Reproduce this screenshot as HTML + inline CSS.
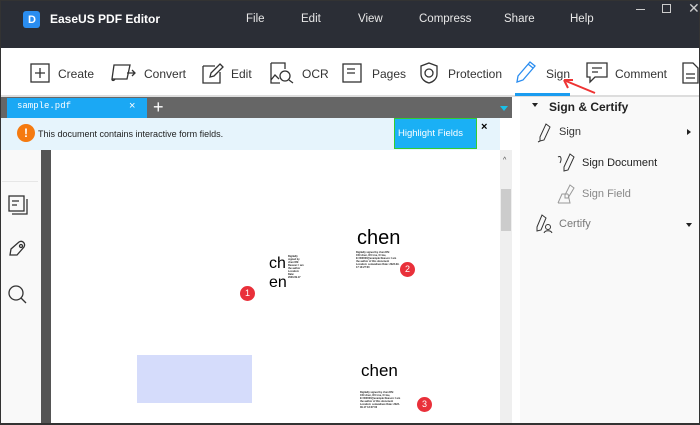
<!DOCTYPE html>
<html><head><meta charset="utf-8"><style>
*{margin:0;padding:0;box-sizing:border-box}
body{width:700px;height:425px;overflow:hidden;font-family:"Liberation Sans",sans-serif;background:#fff;position:relative}
.a{position:absolute}
.top{left:0;top:0;width:700px;height:48px;background:#2b2e36}
.menu{color:#e8e8e8;font-size:11.5px;top:13px}
.tb{top:48px;left:0;width:700px;height:49px;background:#fff;border-bottom:2px solid #ddd}
.ti{font-size:12px;color:#333;top:67px}
svg{position:absolute;fill:none;stroke:#333;stroke-width:1.3}
.small{font-size:2.5px;line-height:3px;font-weight:bold;color:#222}
.badge{width:15px;height:15px;border-radius:50%;background:#e9303a;color:#fff;font-size:9px;text-align:center;line-height:15px}
</style></head><body>
<div class="a top"></div>
<div class="a" style="left:23px;top:11px;width:17px;height:17px;border-radius:3px;background:#2a8df0"></div>
<div class="a" style="left:28px;top:14px;color:#fff;font-size:11px;font-weight:bold">D</div>
<div class="a" style="left:50px;top:12px;color:#fff;font-size:12px;font-weight:bold">EaseUS PDF Editor</div>
<div class="a menu" style="left:246px">File</div>
<div class="a menu" style="left:301px">Edit</div>
<div class="a menu" style="left:358px">View</div>
<div class="a menu" style="left:419px">Compress</div>
<div class="a menu" style="left:504px">Share</div>
<div class="a menu" style="left:570px">Help</div>
<div class="a" style="left:636px;top:9px;width:9px;height:1px;background:#ccc"></div>
<div class="a" style="left:662px;top:4px;width:9px;height:9px;border:1px solid #ccc"></div>
<div class="a" style="left:688px;top:0px;color:#ccc;font-size:14px">✕</div>
<div class="a tb"></div>
<svg style="left:30px;top:63px" width="20" height="20"><rect x="1" y="1" width="18" height="18"/><path d="M10 5v10M5 10h10"/></svg>
<div class="a ti" style="left:58px">Create</div>
<svg style="left:110px;top:63px" width="26" height="20"><path d="M4 2h16l-3 14H2zM2 16c0 2 2 2 3 0M17 10h8m-3-3 3 3-3 3"/></svg>
<div class="a ti" style="left:144px">Convert</div>
<svg style="left:202px;top:62px" width="22" height="22"><path d="M1 4h12M1 4v17h17V10M18 2l3 3-9 9-4 1 1-4z"/></svg>
<div class="a ti" style="left:231px">Edit</div>
<svg style="left:270px;top:62px" width="24" height="22"><path d="M1 1h14v6M1 1v20h9M1 18l4-5 4 4"/><circle cx="15" cy="14" r="5"/><path d="M19 18l4 3"/></svg>
<div class="a ti" style="left:302px">OCR</div>
<svg style="left:342px;top:62px" width="22" height="22"><rect x="1" y="2" width="18" height="18"/><path d="M5 7h8M5 11h8"/></svg>
<div class="a ti" style="left:372px">Pages</div>
<svg style="left:419px;top:62px" width="20" height="22"><path d="M10 1l8 3v8c0 5-4 8-8 9-4-1-8-4-8-9V4z"/><circle cx="10" cy="11" r="4"/></svg>
<div class="a ti" style="left:448px">Protection</div>
<svg style="left:515px;top:61px;stroke:#2a8df0" width="22" height="22"><path d="M15 1l5 4L8 19l-6 2 1-6zM13 3l5 4"/></svg>
<div class="a ti" style="left:546px">Sign</div>
<div class="a" style="left:515px;top:93px;width:55px;height:3px;background:#1a9cf0"></div>
<svg style="left:560px;top:78px;stroke:#e33;stroke-width:2" width="40" height="20"><path d="M35 15L6 3M4 2l9 0M4 2l4 8" /></svg>
<svg style="left:586px;top:62px" width="22" height="22"><path d="M1 1h20v14H9l-5 5v-5H1zM6 6h10M6 10h6"/></svg>
<div class="a ti" style="left:615px">Comment</div>
<svg style="left:682px;top:62px" width="18" height="22"><path d="M1 1h10l5 5v15H1zM4 12h9M4 16h9"/></svg>
<div class="a" style="left:0;top:97px;width:512px;height:21px;background:#666"></div>
<div class="a" style="left:7px;top:98px;width:140px;height:20px;background:#1ba8f4"></div>
<div class="a" style="left:17px;top:101px;color:#fff;font-size:9px;font-family:'Liberation Mono',monospace">sample.pdf</div>
<div class="a" style="left:129px;top:100px;color:#fff;font-size:11px">×</div>
<div class="a" style="left:153px;top:97px;color:#fff;font-size:18px">+</div>
<div class="a" style="top:106px;left:500px;width:0;height:0;border-left:4px solid transparent;border-right:4px solid transparent;border-top:5px solid #19c0e8"></div>
<div class="a" style="left:0;top:118px;width:500px;height:32px;background:#e6f4fc"></div>
<div class="a" style="left:17px;top:124px;width:18px;height:18px;border-radius:50%;background:#f57a10;color:#fff;font-size:12px;font-weight:bold;text-align:center;line-height:18px">!</div>
<div class="a" style="left:38px;top:129px;font-size:9px;color:#222">This document contains interactive form fields.</div>
<div class="a" style="left:394px;top:118px;width:83px;height:31px;background:#1ab0f5;border:1px solid #3c3;color:#fff;font-size:9.5px;line-height:29px;padding-left:3px">Highlight Fields</div>
<div class="a" style="left:481px;top:121px;font-size:11px;font-weight:bold">×</div>
<div class="a" style="left:0;top:150px;width:41px;height:275px;background:#f9f9f9"></div>
<div class="a" style="left:2px;top:181px;width:36px;height:1px;background:#e6e6e6"></div>
<svg style="left:8px;top:195px" width="20" height="20"><rect x="1" y="1" width="15" height="15"/><path d="M4 6h7M4 10h5M19 4v15H4"/></svg>
<svg style="left:8px;top:240px" width="20" height="20"><path d="M2 15l1-6 8-7c3-2 7 1 5 5l-7 8z"/><circle cx="13" cy="6" r="1.5"/></svg>
<svg style="left:8px;top:285px" width="20" height="20"><circle cx="8" cy="8" r="7"/><path d="M13 13l5 5"/></svg>
<div class="a" style="left:41px;top:150px;width:10px;height:275px;background:#555"></div>
<div class="a" style="left:500px;top:150px;width:12px;height:275px;background:#efefef"></div>
<div class="a" style="left:501px;top:189px;width:10px;height:42px;background:#ccc"></div>
<div class="a" style="left:503px;top:157px;font-size:7px;color:#444">^</div>
<div class="a" style="left:269px;top:254px;font-size:16px;line-height:19px">ch<br>en</div>
<div class="a small" style="left:288px;top:255px;width:16px">Digitally signed by chen DN: Reason: I am the author Location: Date: 2023.09.17</div>
<div class="a badge" style="left:240px;top:286px">1</div>
<div class="a" style="left:357px;top:227px;font-size:20px">chen</div>
<div class="a small" style="left:356px;top:251px;width:44px">Digitally signed by chen DN: CN=chen, OU=me, O=me, E=000000@example Reason: I am the author of this document Location: somewhere Date: 2023-09-17 13:27:00</div>
<div class="a badge" style="left:400px;top:262px">2</div>
<div class="a" style="left:137px;top:355px;width:115px;height:48px;background:#d5dcfb"></div>
<div class="a" style="left:361px;top:361px;font-size:17px">chen</div>
<div class="a small" style="left:360px;top:391px;width:42px">Digitally signed by chen DN: CN=chen, OU=me, O=me, E=000000@example Reason: I am the author of this document Location: somewhere Date: 2023-09-17 13:27:00</div>
<div class="a badge" style="left:417px;top:397px">3</div>
<div class="a" style="left:512px;top:97px;width:188px;height:328px;background:#fff"></div>
<div class="a" style="left:520px;top:97px;width:180px;height:328px;background:#f9f9f9"></div>
<div class="a" style="left:532px;top:103px;width:0;height:0;border-left:3px solid transparent;border-right:3px solid transparent;border-top:4px solid #222"></div>
<div class="a" style="left:549px;top:100px;font-size:12px;font-weight:bold;color:#222">Sign &amp; Certify</div>
<svg style="left:537px;top:123px;stroke-width:1" width="14" height="20"><path d="M9 1l4 3-6 13-4 1 0-4zM3 18l-2 1"/></svg>
<div class="a" style="left:559px;top:126px;font-size:11px;color:#333">Sign</div>
<div class="a" style="left:687px;top:129px;width:0;height:0;border-top:3px solid transparent;border-bottom:3px solid transparent;border-left:4px solid #222"></div>
<svg style="left:557px;top:153px;stroke-width:1" width="20" height="20"><path d="M1 4c3-2 4 2 2 6M13 1l4 3-6 13-4 1 0-4z"/></svg>
<div class="a" style="left:582px;top:157px;font-size:11px;color:#222">Sign Document</div>
<svg style="left:557px;top:184px;stroke-width:1;stroke:#999" width="20" height="20"><path d="M1 19l4-9h6M11 10l2 9H1M13 1l4 3-6 10-3 0 0-3z"/></svg>
<div class="a" style="left:582px;top:188px;font-size:11px;color:#888">Sign Field</div>
<svg style="left:535px;top:214px;stroke-width:1" width="20" height="20"><path d="M7 1l4 3-5 12-4 1 0-4z"/><circle cx="13" cy="13" r="2.5"/><path d="M9 19c1-3 7-3 8 0"/></svg>
<div class="a" style="left:559px;top:218px;font-size:11px;color:#777">Certify</div>
<div class="a" style="left:686px;top:223px;width:0;height:0;border-left:3px solid transparent;border-right:3px solid transparent;border-top:4px solid #222"></div>
<div class="a" style="left:0;top:0;width:700px;height:425px;border:1px solid #333;border-bottom:2px solid #333;pointer-events:none"></div>
</body></html>
